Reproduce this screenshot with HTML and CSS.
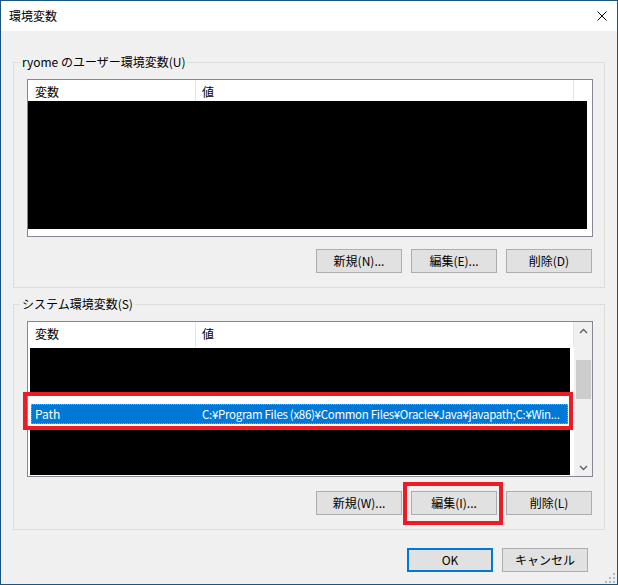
FILE: index.html
```html
<!DOCTYPE html>
<html lang="ja">
<head>
  <meta charset="UTF-8">
  <title>環境変数</title>
  <link rel="stylesheet" href="styles.css">
</head>
<body>
  <div class="window">
    <div class="titlebar">
      <span class="title">環境変数</span>
      <svg class="close" width="10" height="10" viewBox="0 0 10 10">
        <path d="M0.5 0.5 L9.5 9.5 M9.5 0.5 L0.5 9.5" stroke="#000" stroke-width="1" fill="none"/>
      </svg>
    </div>

    <div class="content">
      <!-- ユーザー環境変数 -->
      <fieldset class="group group-user">
        <legend>ryome のユーザー環境変数(U)</legend>
        <div class="list list-user">
          <div class="list-head">
            <span class="col-name">変数</span>
            <span class="col-value">値</span>
            <span class="col-rest"></span>
          </div>
          <div class="redact redact-user"></div>
        </div>
        <div class="btn-row btn-row-user">
          <button class="btn">新規(N)...</button>
          <button class="btn">編集(E)...</button>
          <button class="btn">削除(D)</button>
        </div>
      </fieldset>

      <!-- システム環境変数 -->
      <fieldset class="group group-system">
        <legend>システム環境変数(S)</legend>
        <div class="list list-system">
          <div class="list-main">
            <div class="list-head list-head-system">
              <span class="col-name">変数</span>
              <span class="col-value">値</span>
            </div>
            <div class="redact redact-top"></div>
            <div class="row-gap-top"></div>
            <div class="row selected">
              <span class="cell-name">Path</span>
              <span class="cell-value">C:¥Program Files (x86)¥Common Files¥Oracle¥Java¥javapath;C:¥Win...</span>
            </div>
            <div class="row-gap-bottom"></div>
            <div class="redact redact-bottom"></div>
          </div>
          <div class="scrollbar">
            <span class="arrow">
              <svg width="9" height="6" viewBox="0 0 9 6"><path d="M1 5 L4.5 1.5 L8 5" stroke="#606060" stroke-width="1.4" fill="none"/></svg>
            </span>
            <span class="track"><span class="thumb"></span></span>
            <span class="arrow">
              <svg width="9" height="6" viewBox="0 0 9 6"><path d="M1 1 L4.5 4.5 L8 1" stroke="#606060" stroke-width="1.4" fill="none"/></svg>
            </span>
          </div>
          <div class="mark mark-row"></div>
        </div>
        <div class="btn-row btn-row-system">
          <button class="btn">新規(W)...</button>
          <span class="mark-btn"><button class="btn">編集(I)...</button></span>
          <button class="btn">削除(L)</button>
        </div>
      </fieldset>

      <div class="footer">
        <button class="btn btn-default">OK</button>
        <button class="btn">キャンセル</button>
      </div>
    </div>

    <svg class="grip" width="10" height="10" viewBox="0 0 10 10">
      <rect x="8" y="0" width="2" height="2" fill="#b8b8b8"/>
      <rect x="4" y="4" width="2" height="2" fill="#b8b8b8"/>
      <rect x="8" y="4" width="2" height="2" fill="#b8b8b8"/>
      <rect x="0" y="8" width="2" height="2" fill="#b8b8b8"/>
      <rect x="4" y="8" width="2" height="2" fill="#b8b8b8"/>
      <rect x="8" y="8" width="2" height="2" fill="#b8b8b8"/>
    </svg>
  </div>
</body>
</html>
```

FILE: styles.css
```css
* {
  margin: 0;
  padding: 0;
  box-sizing: border-box;
}

body {
  width: 618px;
  height: 585px;
  background-color: #f0f0f0;
  font-family: "Noto Sans CJK JP", sans-serif;
  font-size: 12px;
  color: #000;
}

.window {
  position: relative;
  width: 618px;
  height: 585px;
  border: 1px solid #1b5381;
  background-color: #f0f0f0;
  display: flex;
  flex-direction: column;
}

.titlebar {
  height: 30px;
  flex: 0 0 30px;
  background-color: #fff;
  display: flex;
  justify-content: space-between;
  align-items: center;
  padding: 0 10px 0 8px;
}

.title {
  line-height: 16px;
}

.content {
  padding: 0 12px;
  display: flex;
  flex-direction: column;
}

/* グループボックス */
.group {
  border: 1px solid #dcdcdc;
  padding: 9px 11px 14px 13px;
  min-width: 0;
}

.group > legend {
  margin-left: -7px;
  padding: 0 2px;
  line-height: 16px;
}

.group-user {
  margin-top: 23px;
}

.group-system {
  margin-top: 8px;
}

/* リストビュー */
.list {
  position: relative;
  border: 1px solid #828790;
  background-color: #fff;
}

.list-user {
  height: 158px;
}

.list-system {
  height: 156px;
  display: flex;
}

.list-head {
  height: 21px;
  display: flex;
  line-height: 18px;
}

.list-head-system {
  height: 25px;
}

.list-head > span {
  padding-top: 3px;
  border-right: 1px solid #e5e5e5;
}

.col-name {
  width: 168px;
  padding-left: 7px;
}

.col-value {
  width: 378px;
  padding-left: 6px;
}

.list-head > .col-rest {
  flex: 1;
  border-right: none;
}

.redact {
  background-color: #000;
}

.redact-user {
  height: 128px;
  margin-right: 5px;
}

.list-main {
  flex: 1;
  min-width: 0;
}

.redact-top {
  height: 45px;
  margin: 1px 4px 0 2px;
}

.row-gap-top {
  height: 11px;
}

.row-gap-bottom {
  height: 6px;
}

.redact-bottom {
  height: 45px;
  margin: 0 4px 0 2px;
}

.row {
  height: 20px;
  margin: 0 6px 0 3px;
  display: flex;
  line-height: 18px;
  white-space: nowrap;
}

.row.selected {
  background-color: #0078d7;
  color: #fff;
  border: 1px dotted #ff8728;
}

.cell-name {
  flex: 0 0 170px;
  padding-left: 3px;
}

.cell-value {
  flex: 1;
  overflow: hidden;
  font-size: 11.5px;
  letter-spacing: -0.3px;
}

/* スクロールバー */
.scrollbar {
  width: 18px;
  background-color: #f0f0f0;
  display: flex;
  flex-direction: column;
}

.arrow {
  height: 17px;
  display: flex;
  justify-content: center;
  align-items: center;
}

.track {
  flex: 1;
  padding: 21px 1px 0 2px;
}

.thumb {
  display: block;
  height: 39px;
  background-color: #cdcdcd;
}

/* 注釈の赤枠 */
.mark {
  position: absolute;
  border: 4px solid #ed1c24;
}

.mark-row {
  left: -5px;
  top: 70px;
  width: 550px;
  height: 38px;
}

.mark-btn {
  display: flex;
  border: 4px solid #ed1c24;
  padding: 5px 2px 6px 4px;
  margin: -9px -6px -10px -8px;
}

/* ボタン */
.btn-row {
  display: flex;
  justify-content: flex-end;
  gap: 9px;
  padding-right: 1px;
}

.btn-row-user {
  margin-top: 12px;
}

.btn-row-system {
  margin-top: 14px;
}

.btn {
  width: 86px;
  height: 24px;
  border: 1px solid #adadad;
  background-color: #e1e1e1;
  font-family: inherit;
  font-size: 12px;
  color: #000;
  line-height: 16px;
}

.btn-default {
  border: 2px solid #0078d7;
}

.footer {
  display: flex;
  justify-content: flex-end;
  gap: 9px;
  margin-top: 18px;
  padding-right: 17px;
}

.grip {
  position: absolute;
  right: 2px;
  bottom: 1px;
}
```
